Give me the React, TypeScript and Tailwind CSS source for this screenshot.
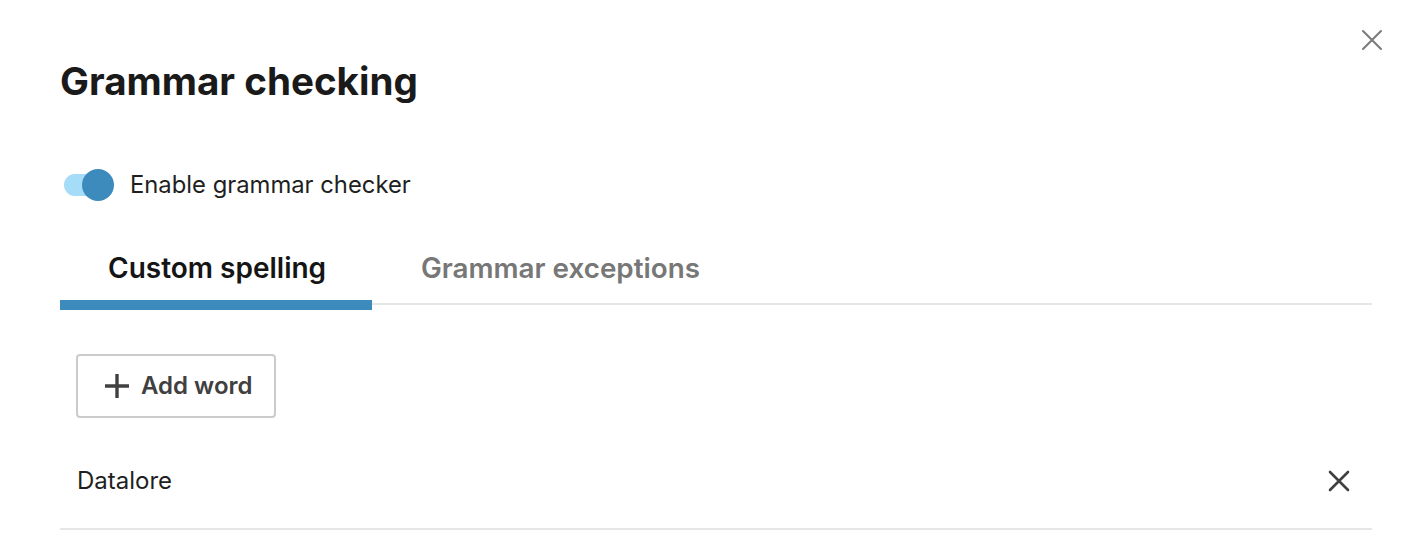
import React from "react";

export default function App() {
  return (
    <div className="relative w-[1428px] h-[548px] bg-white overflow-hidden" style={{ fontFamily: "Inter, 'Noto Sans', sans-serif" }}>
      <button className="absolute left-[1361px] top-[29px] w-[22px] h-[22px] flex items-center justify-center">
        <svg width="22" height="22" viewBox="0 0 22 22" fill="none" stroke="#7a7a7a" strokeWidth="2" strokeLinecap="round">
          <path d="M2 2L20 20M20 2L2 20" />
        </svg>
      </button>
      <div className="pl-[60px] pr-[56px] pt-[56px]">
        <h1 className="text-[38.6px] leading-[50px] font-bold text-[#1a1a1a]">Grammar checking</h1>
        <div className="mt-[62px] flex items-center h-[34px]">
          <div className="relative w-[52px] h-[32px] ml-[3px]">
            <div className="absolute left-[1px] top-[5px] w-[36px] h-[22px] rounded-full bg-[#a5dcf7]" />
            <div className="absolute left-[19px] top-0 w-[32px] h-[32px] rounded-full bg-[#3d8bbd]" />
          </div>
          <span className="ml-[15px] text-[23.8px] text-[#1f1f1f]">Enable grammar checker</span>
        </div>
        <div className="mt-[49px] flex border-b-2 border-[#e6e6e6]">
          <div className="w-[312px] -mb-[7px] border-b-[10px] border-[#3d8bbd] pl-[48px] pb-[15px]">
            <span className="block text-[28px] leading-[34px] font-semibold text-[#151515]">Custom spelling</span>
          </div>
          <div className="pl-[49px] pb-[15px]">
            <span className="block text-[27.8px] leading-[34px] font-semibold text-[#777777]">Grammar exceptions</span>
          </div>
        </div>
        <div className="mt-[49px] pl-[16px]">
          <button className="flex items-center w-[200px] h-[64px] border-2 border-[#cbcbcb] rounded-[4px] pl-[26px]">
            <svg width="26" height="26" viewBox="0 0 26 26" fill="none" stroke="#404040" strokeWidth="3.4">
              <path d="M13 1V25M1 13H25" />
            </svg>
            <span className="ml-[11px] text-[24px] font-semibold text-[#404040]">Add word</span>
          </button>
        </div>
        <div className="mt-[16px] flex items-center justify-between h-[96px] border-b-2 border-[#e6e6e6] pl-[17px] pr-[22px]">
          <span className="text-[24px] text-[#1f1f1f]">Datalore</span>
          <svg width="22" height="22" viewBox="0 0 22 22" fill="none" stroke="#404040" strokeWidth="2.6" strokeLinecap="round">
            <path d="M2 2L20 20M20 2L2 20" />
          </svg>
        </div>
      </div>
    </div>
  );
}
